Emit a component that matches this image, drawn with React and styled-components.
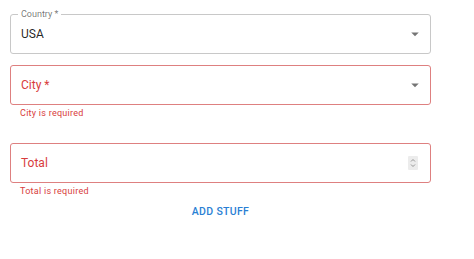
import React from 'react'
import styled, { createGlobalStyle } from 'styled-components'

const GlobalStyle = createGlobalStyle`
	body {
		margin: 0;
		background: #fff;
		font-family: Roboto, "Liberation Sans", Arial, sans-serif;
	}
`

const Form = styled.form`
	width: 421px;
	padding: 14px 0 0 10px;
	display: flex;
	flex-direction: column;
`

const Group = styled.div`
	display: flex;
	flex-direction: column;
	margin-bottom: ${(p) => p.gap}px;
`

const Box = styled.div`
	position: relative;
	box-sizing: border-box;
	height: 40px;
	display: flex;
	align-items: center;
	padding: 0 11px 0 10px;
	border: 1px solid ${(p) => (p.error ? '#de8080' : '#c8c8c8')};
	border-radius: 3px;
`

const FloatLabel = styled.span`
	position: absolute;
	top: -7px;
	left: 7px;
	padding: 0 3px;
	background: #fff;
	font-size: 9px;
	line-height: 12px;
	color: rgba(0, 0, 0, 0.55);
`

const Value = styled.span`
	flex: 1;
	font-size: 12px;
	line-height: 16px;
	color: rgba(0, 0, 0, 0.87);
`

const Placeholder = styled(Value)`
	color: #d83c3c;
`

const Helper = styled.span`
	margin: 2px 0 0 10px;
	font-size: 9px;
	line-height: 12px;
	letter-spacing: 0.03em;
	color: #d83c3c;
`

const Spinner = styled.span`
	width: 10px;
	height: 14px;
	margin-right: 1px;
	display: flex;
	align-items: center;
	justify-content: center;
	background: #ececec;
	border-radius: 1px;
`

const Button = styled.button`
	align-self: center;
	margin-top: 1px;
	padding: 7px 8px;
	border: 0;
	background: none;
	font-family: inherit;
	font-size: 10.5px;
	font-weight: 500;
	line-height: 13px;
	letter-spacing: 0.03em;
	text-transform: uppercase;
	color: #2a7fd4;
	cursor: pointer;
`

const Caret = () => (
	<svg width="18" height="18" viewBox="0 0 24 24" style={{ marginRight: -5 }}>
		<path d="M7 10l5 5 5-5z" fill="rgba(0,0,0,0.54)" />
	</svg>
)

const SpinIcon = () => (
	<Spinner>
		<svg width="6" height="10" viewBox="0 0 6 10">
			<path
				d="M1 3.5L3 1.5 5 3.5M1 6.5L3 8.5 5 6.5"
				fill="none"
				stroke="#8a8a8a"
				strokeWidth="0.9"
			/>
		</svg>
	</Spinner>
)

const App = () => (
	<>
		<GlobalStyle />
		<Form onSubmit={(e) => e.preventDefault()}>
			<Group gap={11}>
				<Box>
					<FloatLabel>Country *</FloatLabel>
					<Value>USA</Value>
					<Caret />
				</Box>
			</Group>
			<Group gap={24}>
				<Box error>
					<Placeholder>City *</Placeholder>
					<Caret />
				</Box>
				<Helper>City is required</Helper>
			</Group>
			<Group gap={0}>
				<Box error>
					<Placeholder>Total</Placeholder>
					<SpinIcon />
				</Box>
				<Helper>Total is required</Helper>
			</Group>
			<Button type="button">Add Stuff</Button>
		</Form>
	</>
)

export default App
